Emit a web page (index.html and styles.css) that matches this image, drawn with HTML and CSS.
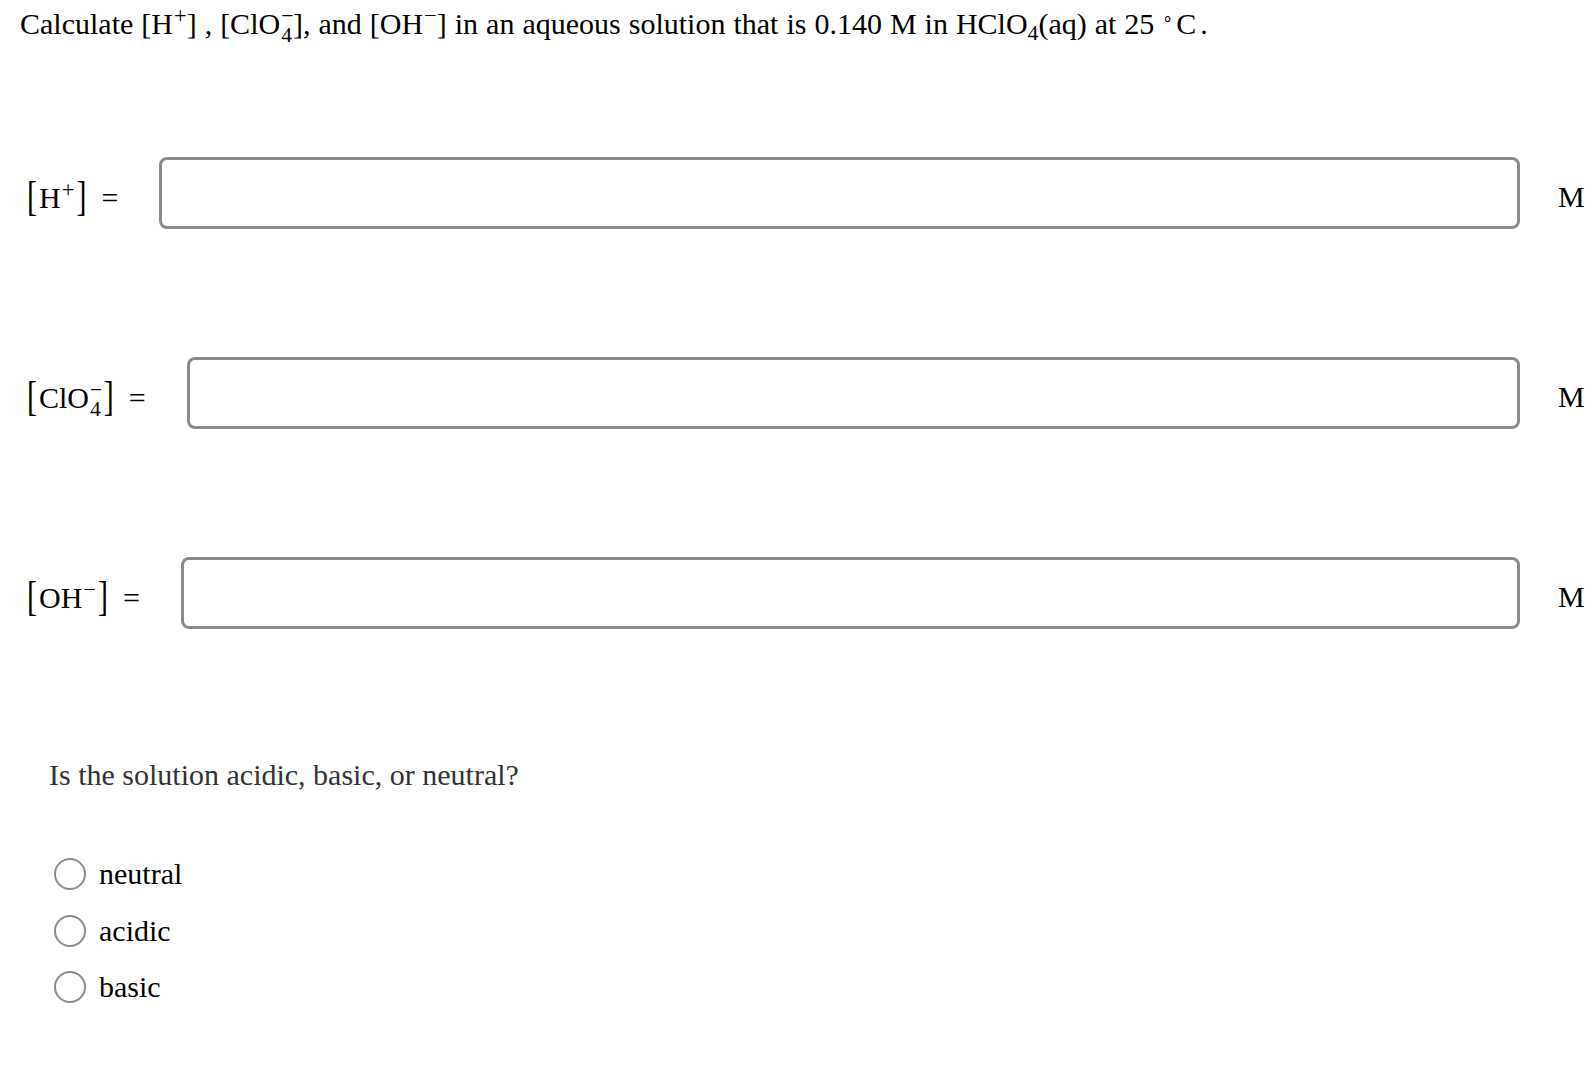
FILE: index.html
```html
<!DOCTYPE html>
<html lang="en">
<head>
<meta charset="utf-8">
<title>Calculate concentrations</title>
<link rel="stylesheet" href="styles.css">
</head>
<body>
<p class="prompt">Calculate [H<sup class="sup">+</sup>] , [ClO<span class="supsub"><span class="ss-bot">4</span><span class="ss-top">−</span></span>], and [OH<sup class="sup">−</sup>] in an aqueous solution that is 0.140 M in HClO<sub class="sub">4</sub>(aq) at 25 <span class="deg">∘</span>C<span class="dot">.</span></p>

<div class="rows">
  <div class="row">
    <div class="label"><span class="br">[</span>H<sup class="sup">+</sup><span class="br">]</span></div>
    <div class="eq">=</div>
    <div class="box"></div>
    <div class="unit">M</div>
  </div>
  <div class="row">
    <div class="label"><span class="br">[</span>ClO<span class="supsub"><span class="ss-bot">4</span><span class="ss-top">−</span></span><span class="br">]</span></div>
    <div class="eq">=</div>
    <div class="box"></div>
    <div class="unit">M</div>
  </div>
  <div class="row">
    <div class="label"><span class="br">[</span>OH<sup class="sup">−</sup><span class="br">]</span></div>
    <div class="eq">=</div>
    <div class="box"></div>
    <div class="unit">M</div>
  </div>
</div>

<p class="question">Is the solution acidic, basic, or neutral?</p>

<ul class="options">
  <li class="option"><span class="radio"></span><span class="opt-text">neutral</span></li>
  <li class="option"><span class="radio"></span><span class="opt-text">acidic</span></li>
  <li class="option"><span class="radio"></span><span class="opt-text">basic</span></li>
</ul>
</body>
</html>
```

FILE: styles.css
```css
html, body {
  margin: 0;
  padding: 0;
  background: #fff;
}
body {
  font-family: "Liberation Serif", "Times New Roman", serif;
  color: #000;
}
.prompt {
  margin: 0;
  padding: 8px 0 0 20px;
  height: 32px;
  font-size: 30px;
  line-height: 32px;
  word-spacing: 0.5px;
  white-space: nowrap;
}
.sup {
  font-size: 0.75em;
  vertical-align: 0;
  position: relative;
  top: -0.5em;
  line-height: 0;
  margin-left: 1px;
}
.sub {
  font-size: 0.72em;
  vertical-align: 0;
  position: relative;
  top: 0.3em;
  line-height: 0;
}
.supsub {
  display: inline-block;
  position: relative;
  font-size: 0.72em;
  line-height: 0;
  margin: 0 1px;
}
.ss-bot {
  position: relative;
  top: 0.38em;
}
.ss-top {
  position: absolute;
  left: 0;
  top: -0.95em;
  line-height: 1;
}
.deg {
  font-size: 0.6em;
  position: relative;
  top: -0.55em;
  line-height: 0;
  margin-right: 3px;
}
.dot {
  margin-left: 4px;
}
.rows {
  margin-top: 117px;
  display: flex;
  flex-direction: column;
  gap: 128px;
  padding: 0 7px 0 27px;
}
.row {
  display: flex;
  align-items: center;
  height: 72px;
}
.label {
  font-size: 30px;
  line-height: 40px;
  white-space: nowrap;
  position: relative;
  top: 5px;
}
.br {
  display: inline-block;
  padding: 0 2px;
  transform: scale(1, 1.42);
  transform-origin: 50% 62%;
}
.br:first-child {
  padding-left: 0;
}
.eq {
  font-size: 30px;
  line-height: 40px;
  margin-left: 13px;
  position: relative;
  top: 5px;
}
.box {
  flex: 1;
  margin-left: 41px;
  height: 72px;
  box-sizing: border-box;
  border: 3px solid #8a8a8a;
  border-radius: 8px;
}
.unit {
  margin-left: 38px;
  width: 27px;
  font-size: 30px;
  line-height: 32px;
  position: relative;
  top: 4px;
}
.question {
  margin: 130px 0 0 49px;
  font-size: 30px;
  line-height: 32px;
  color: #333;
}
.options {
  list-style: none;
  margin: 55px 0 0 0;
  padding: 0 0 0 54px;
}
.option {
  display: flex;
  align-items: center;
  height: 56.5px;
  font-size: 30px;
}
.radio {
  width: 32px;
  height: 32px;
  box-sizing: border-box;
  border: 2.5px solid #8a8a8a;
  border-radius: 50%;
  flex: none;
}
.opt-text {
  margin-left: 13px;
}
```
